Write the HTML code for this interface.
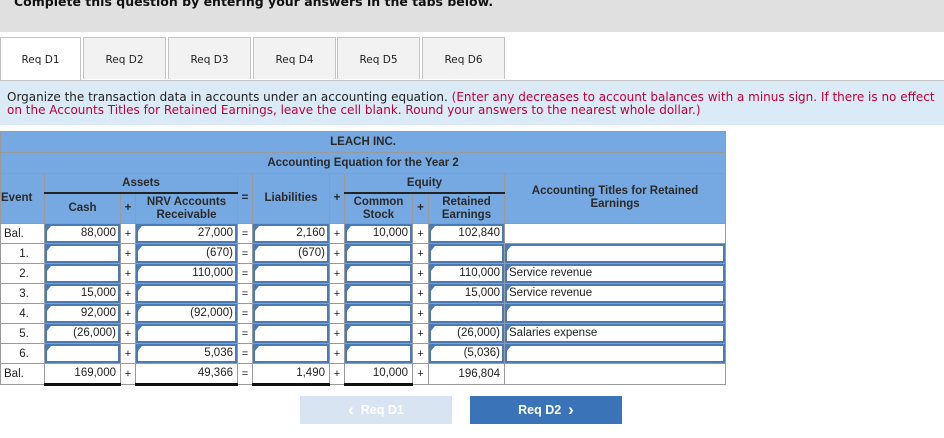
<!DOCTYPE html>
<html><head><meta charset="utf-8"><style>
body{margin:0;width:944px;height:438px;background:#fff;font-family:"Liberation Sans",Arial,sans-serif;position:relative;overflow:hidden}
.top{position:absolute;left:0;top:0;width:944px;height:32px;background:#e0e0e0}
.top b{position:absolute;left:14px;top:-6px;font-family:"DejaVu Sans",sans-serif;font-size:12.5px;color:#111}
.tab{position:absolute;top:37px;height:42px;background:#f2f2f2;border:1px solid #c4c4c4;border-bottom:none;box-sizing:border-box;font-family:"DejaVu Sans",sans-serif;font-size:10.5px;color:#222;text-align:center;line-height:44px}
.band{position:absolute;left:0;top:80px;width:944px;height:45px;background:#dbeaf7;border-top:1px solid #c4c4c4;box-sizing:border-box;font-family:"DejaVu Sans",sans-serif;font-size:12px;line-height:13px;padding:10px 0 0 7px;color:#222;white-space:nowrap;overflow:hidden}
.band span{color:#c0003a}
table{position:absolute;left:0;top:131px;border-collapse:collapse;table-layout:fixed;width:725px;font-size:11.5px;color:#222}
td{border:1px solid #9a9a9a;padding:0;overflow:hidden;white-space:nowrap}
.h td{background:#76a9e2;text-align:center;font-weight:bold;font-size:11.5px;color:#2a2a2a;line-height:13px}
.d td{height:18.5px;background:#fff}
.in{border:2px solid #4a7bb7;height:15px;line-height:15px;text-align:right;padding-right:2px;position:relative}
.in:before{content:"";position:absolute;left:0;top:0;border-top:5px solid #4a7bb7;border-right:4px solid transparent}
.tx{text-align:left;padding-left:2px}
.op{text-align:center;font-size:11px}
.ev{padding-left:3px}
.bal td.n{text-align:right;padding-right:4px;border-bottom:3px solid #111}
.btn{position:absolute;top:396px;height:28px;font-weight:bold;font-size:12.5px;color:#fff;text-align:center;line-height:28px}
.btn i{font-style:normal;font-size:17px;vertical-align:-1px}
</style></head><body>
<div class="top"><b>Complete this question by entering your answers in the tabs below.</b></div>
<div class="tab" style="left:0;width:81px;background:#fff;height:44px">Req D1</div>
<div class="tab" style="left:83px;width:83px">Req D2</div>
<div class="tab" style="left:168px;width:83px">Req D3</div>
<div class="tab" style="left:253px;width:83px">Req D4</div>
<div class="tab" style="left:337px;width:83px">Req D5</div>
<div class="tab" style="left:422px;width:83px">Req D6</div>
<div class="band">Organize the transaction data in accounts under an accounting equation. <span>(Enter any decreases to account balances with a minus sign. If there is no effect<br>on the Accounts Titles for Retained Earnings, leave the cell blank. Round your answers to the nearest whole dollar.)</span></div>
<table>
<colgroup><col style="width:44px"><col style="width:76px"><col style="width:15px"><col style="width:102px"><col style="width:15px"><col style="width:77px"><col style="width:15px"><col style="width:68px"><col style="width:16px"><col style="width:76px"><col style="width:221px"></colgroup>
<tr class="h"><td colspan="11" style="height:20px">LEACH INC.</td></tr>
<tr class="h"><td colspan="11" style="height:20px">Accounting Equation for the Year 2</td></tr>
<tr class="h"><td rowspan="2" style="text-align:left">Event</td><td colspan="3" style="height:18px;border-bottom:2px solid #222">Assets</td><td rowspan="2">=</td><td rowspan="2">Liabilities</td><td rowspan="2">+</td><td colspan="3" style="border-bottom:2px solid #222">Equity</td><td rowspan="2" style="vertical-align:top;padding-top:11px">Accounting Titles for Retained<br>Earnings</td></tr>
<tr class="h"><td style="height:29px">Cash</td><td>+</td><td>NRV Accounts<br>Receivable</td><td>Common<br>Stock</td><td>+</td><td>Retained<br>Earnings</td></tr>
<tr class="d"><td class="ev">Bal.</td><td><div class="in">88,000</div></td><td class="op">+</td><td><div class="in">27,000</div></td><td class="op">=</td><td><div class="in">2,160</div></td><td class="op">+</td><td><div class="in">10,000</div></td><td class="op">+</td><td><div class="in">102,840</div></td><td></td></tr>
<tr class="d"><td class="ev" style="text-align:center">1.</td><td><div class="in"></div></td><td class="op">+</td><td><div class="in">(670)</div></td><td class="op">=</td><td><div class="in">(670)</div></td><td class="op">+</td><td><div class="in"></div></td><td class="op">+</td><td><div class="in"></div></td><td><div class="in tx"></div></td></tr>
<tr class="d"><td class="ev" style="text-align:center">2.</td><td><div class="in"></div></td><td class="op">+</td><td><div class="in">110,000</div></td><td class="op">=</td><td><div class="in"></div></td><td class="op">+</td><td><div class="in"></div></td><td class="op">+</td><td><div class="in">110,000</div></td><td><div class="in tx">Service revenue</div></td></tr>
<tr class="d"><td class="ev" style="text-align:center">3.</td><td><div class="in">15,000</div></td><td class="op">+</td><td><div class="in"></div></td><td class="op">=</td><td><div class="in"></div></td><td class="op">+</td><td><div class="in"></div></td><td class="op">+</td><td><div class="in">15,000</div></td><td><div class="in tx">Service revenue</div></td></tr>
<tr class="d"><td class="ev" style="text-align:center">4.</td><td><div class="in">92,000</div></td><td class="op">+</td><td><div class="in">(92,000)</div></td><td class="op">=</td><td><div class="in"></div></td><td class="op">+</td><td><div class="in"></div></td><td class="op">+</td><td><div class="in"></div></td><td><div class="in tx"></div></td></tr>
<tr class="d"><td class="ev" style="text-align:center">5.</td><td><div class="in">(26,000)</div></td><td class="op">+</td><td><div class="in"></div></td><td class="op">=</td><td><div class="in"></div></td><td class="op">+</td><td><div class="in"></div></td><td class="op">+</td><td><div class="in">(26,000)</div></td><td><div class="in tx">Salaries expense</div></td></tr>
<tr class="d"><td class="ev" style="text-align:center">6.</td><td><div class="in"></div></td><td class="op">+</td><td><div class="in">5,036</div></td><td class="op">=</td><td><div class="in"></div></td><td class="op">+</td><td><div class="in"></div></td><td class="op">+</td><td><div class="in">(5,036)</div></td><td><div class="in tx"></div></td></tr>
<tr class="d bal"><td class="ev">Bal.</td><td class="n">169,000</td><td class="op">+</td><td class="n">49,366</td><td class="op">=</td><td class="n">1,490</td><td class="op">+</td><td class="n">10,000</td><td class="op">+</td><td class="n" style="border-bottom:1px solid #9a9a9a">196,804</td><td></td></tr>
</table>
<div class="btn" style="left:300px;width:152px;background:#d9e4f2;color:#fff"><i>‹</i>&nbsp;&nbsp;Req D1</div>
<div class="btn" style="left:470px;width:152px;background:#3a73b8">Req D2&nbsp;&nbsp;<i>›</i></div>
</body></html>
